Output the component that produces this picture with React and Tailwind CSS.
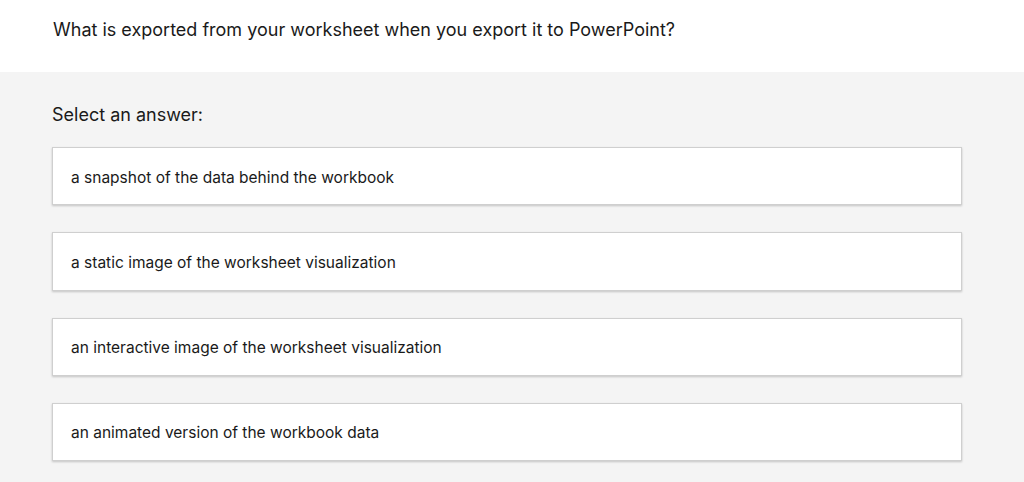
import React from 'react';

const answers = [
  'a snapshot of the data behind the workbook',
  'a static image of the worksheet visualization',
  'an interactive image of the worksheet visualization',
  'an animated version of the workbook data',
];

export default function App() {
  return (
    <div className="min-h-screen bg-[#f4f4f4] text-[#1a1a1a]" style={{ fontFamily: 'Inter, "Liberation Sans", sans-serif' }}>
      <div className="bg-white h-[72px] pl-[53px] pt-[18px]">
        <p className="text-[18px] leading-[24px]">
          What is exported from your worksheet when you export it to PowerPoint?
        </p>
      </div>
      <div className="pl-[52px] pr-[62px] pt-[31px]">
        <p className="text-[18px] leading-[24px] mb-[20px]">Select an answer:</p>
        <div className="flex flex-col gap-[27px]">
          {answers.map((a) => (
            <div
              key={a}
              className="bg-white border border-[#cfcfcf] shadow-[0_1px_2px_rgba(0,0,0,0.2)] h-[58.3px] flex items-center pl-[18px] pt-[2px] text-[15.5px]"
            >
              {a}
            </div>
          ))}
        </div>
      </div>
    </div>
  );
}
